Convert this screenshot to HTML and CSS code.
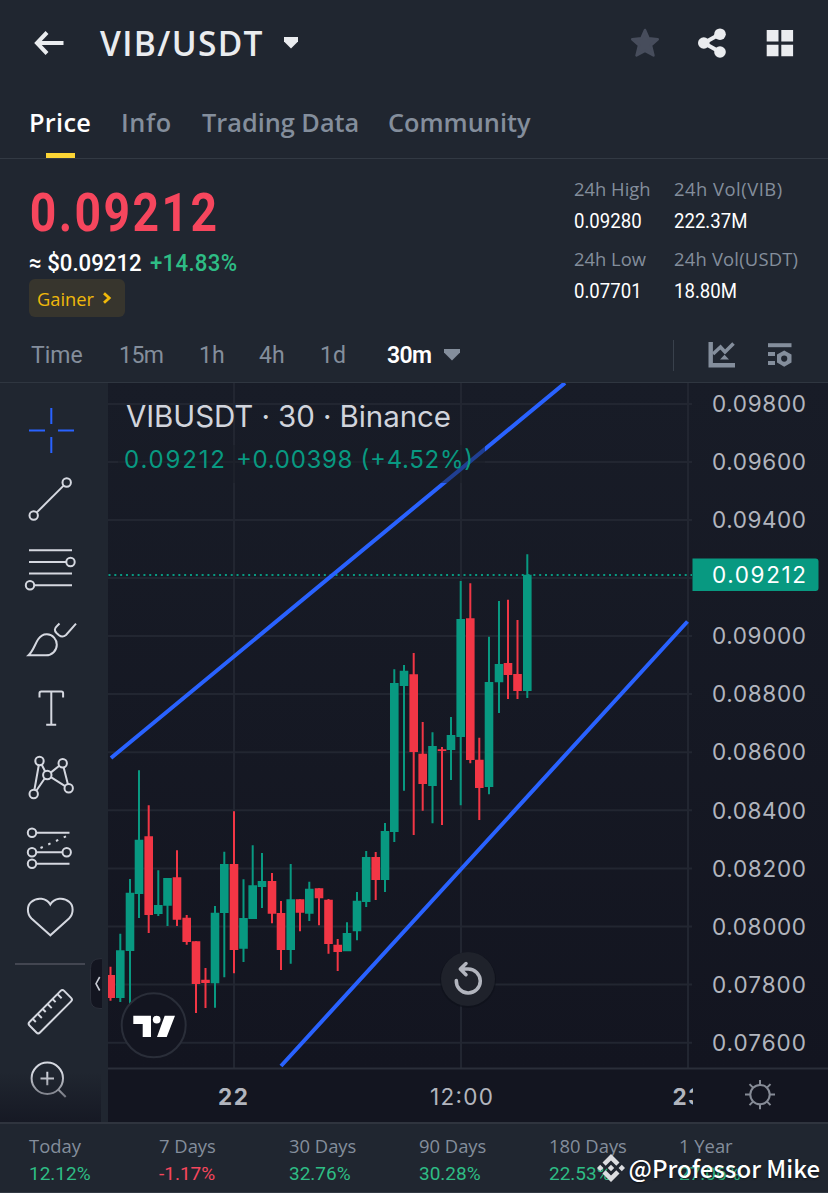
FILE: index.html
```html
<!DOCTYPE html>
<html lang="en">
<head>
<meta charset="utf-8">
<title>VIB/USDT</title>
<link rel="stylesheet" href="styles.css">
</head>
<body>
<div class="app">
  <header class="topbar">
    <svg class="back" width="30" height="26" viewBox="0 0 30 26"><path d="M13 2.500L3 13L13 23.500M3.500 13H29.500" fill="none" stroke="#eaecef" stroke-width="4"/></svg>
    <h1 class="pair">VIB/USDT</h1>
    <svg class="caret" width="16" height="12" viewBox="0 0 16 12"><path d="M1 0H15V4.500L8 11.500L1 4.500Z" fill="#eaecef"/></svg>
    <div class="actions">
      <svg width="30" height="32" viewBox="0 0 30 32"><path d="M15 3L18.600 11.300L27.800 12.200L21 18.300L23.500 28.500L15 24L6.500 28.500L9 18.300L2.200 12.200L11.400 11.300Z" fill="#474d5c" stroke="#474d5c" stroke-width="2.500" stroke-linejoin="round"/></svg>
      <svg width="30" height="32" viewBox="0 0 30 32"><path d="M23 7L7 16L23 25" fill="none" stroke="#eaecef" stroke-width="4"/><circle cx="23" cy="7.200" r="5.800" fill="#eaecef"/><circle cx="6.800" cy="16" r="5.800" fill="#eaecef"/><circle cx="23" cy="25" r="5.800" fill="#eaecef"/></svg>
      <svg width="28" height="28" viewBox="0 0 28 28"><path d="M.7 1H12.500V12.500H.7ZM15.300 1H27.100V12.500H15.300ZM.7 15.700H12.500V27.200H.7ZM15.300 15.700H27.100V27.200H15.300Z" fill="#eaecef"/></svg>
    </div>
  </header>

  <nav class="tabs">
    <a class="tab tab-active">Price</a>
    <a class="tab tab-info">Info</a>
    <a class="tab tab-trading">Trading Data</a>
    <a class="tab tab-community">Community</a>
  </nav>

  <section class="summary">
    <div class="quote">
      <div class="last">0.09212</div>
      <div class="fiat"><span class="approx">≈ $0.09212</span><span class="up change">+14.83%</span></div>
      <div class="tag"><span>Gainer</span><svg width="10" height="12" viewBox="0 0 10 12"><path d="M2 1.200L7.200 6L2 10.800" fill="none" stroke="#f0b90b" stroke-width="2.800"/></svg></div>
    </div>
    <dl class="stats">
      <div><dt>24h High</dt><dd>0.09280</dd></div>
      <div><dt class="base-vol">24h Vol(VIB)</dt><dd>222.37M</dd></div>
      <div><dt>24h Low</dt><dd>0.07701</dd></div>
      <div><dt class="quote-vol">24h Vol(USDT)</dt><dd>18.80M</dd></div>
    </dl>
  </section>

  <div class="intervals">
    <span class="iv iv-time">Time</span>
    <span class="iv iv-15">15m</span>
    <span class="iv iv-1h">1h</span>
    <span class="iv iv-4h">4h</span>
    <span class="iv iv-1d">1d</span>
    <span class="iv iv-active">30m</span>
    <svg class="iv-caret" width="16" height="12" viewBox="0 0 16 12"><path d="M0 0H16V3.500L8 11.500L0 3.500Z" fill="#848e9c"/></svg>
    <div class="chart-tools">
      <svg width="28" height="28" viewBox="0 0 28 28"><path d="M2.700 1V24.300H27" fill="none" stroke="#848e9c" stroke-width="4.400"/><path d="M5 13L12.500 6L17 11L25.500 2.500" fill="none" stroke="#848e9c" stroke-width="3.600"/><path d="M16.500 13.700L21 18.500H12Z" fill="#848e9c"/></svg>
      <svg width="26" height="26" viewBox="0 0 26 26"><path d="M1 3.200H24.500" stroke="#848e9c" stroke-width="4"/><path d="M1 12H8M1 21H8" stroke="#848e9c" stroke-width="4"/><path fill-rule="evenodd" d="M17.200 8.500L24.500 12.500V20.500L17.200 24.800L10 20.500V12.500ZM17.200 13.500A3.100 3.100 0 1 0 17.200 19.700A3.100 3.100 0 1 0 17.200 13.500Z" fill="#848e9c"/></svg>
    </div>
  </div>

  <main class="workspace">
    <aside class="toolbar">
      <svg class="tool" viewBox="0 395 101 70"><path d="M51.300 408V424M51.300 437V453M29 430.500H45M58 430.500H74" stroke="#2962ff" stroke-width="2"/></svg>
      <svg class="tool" viewBox="0 465 101 70"><circle cx="66.700" cy="482.500" r="4.200"/><circle cx="33.700" cy="515.500" r="4.200"/><path d="M36.800 512.400L63.600 485.600"/></svg>
      <svg class="tool" viewBox="0 535 101 70"><path d="M29 550.300H72M29 562H66M29 573.500H72M34.500 585.200H72"/><circle cx="70.500" cy="562" r="4.200"/><circle cx="30" cy="585.200" r="4.200"/></svg>
      <svg class="tool" viewBox="0 605 101 70"><path d="M28.500 655.300C33.500 650.500 35 644 38 639.500C41 635 44.500 634.200 47 634.300C52.800 634.500 56.800 639.500 56.800 644.700C56.800 650.500 52 655.300 46 655.300ZM59.500 623.500L57 626Q53 629.500 56.500 633L59 635.200Q62.500 638 66 635L76 623.700"/></svg>
      <svg class="tool" viewBox="0 675 101 70"><path d="M39.500 697.500V693.200Q39.500 691.500 41.200 691.500H61.400Q63.100 691.500 63.100 693.200V697.500M51.300 691.500V724.700M46.200 724.700H56.200"/></svg>
      <svg class="tool" viewBox="0 745 101 70"><path d="M38.800 765L34.400 790M41.600 764.500L45.200 771.500M44.800 778.300L36.300 790.800M50.700 772.600L59.300 765.700M63.600 767.300L67.900 784.300M50.900 777.200L65.100 786.100"/><circle cx="39.500" cy="761" r="4.200"/><circle cx="62.700" cy="763.300" r="4.200"/><circle cx="47.300" cy="775" r="4.200"/><circle cx="68.700" cy="788.300" r="4.200"/><circle cx="33.700" cy="794" r="4.200"/></svg>
      <svg class="tool" viewBox="0 815 101 70"><path d="M36.200 832.700H69.500M36.200 852.300H62.500M36.200 863.700H69.500"/><path d="M40.500 848L68 835.500" stroke-dasharray="2.500 6"/><circle cx="32" cy="832.700" r="4.200"/><circle cx="32" cy="852.300" r="4.200"/><circle cx="66.700" cy="852.300" r="4.200"/><circle cx="32" cy="863.700" r="4.200"/></svg>
      <svg class="tool" viewBox="0 885 101 70"><path d="M50.300 935.300L31.500 918.500C26.500 913.500 27 905.500 31.200 902C37 896.800 46.500 897.800 50.300 904.500C54.200 897.800 63.700 896.800 69.400 902C73.500 905.500 74 913.500 69 918.500Z"/></svg>
      <hr class="divider">
      <svg class="tool" viewBox="0 974 101 70"><g transform="translate(50.300 1011.700) rotate(-45)"><rect x="-24.500" y="-7.400" width="49" height="14.800" rx="2.500"/><path d="M-17.500 -7.400V-3M-10.500 -7.400V-1.500M-3.500 -7.400V-3M3.500 -7.400V-1.500M10.500 -7.400V-3M17.500 -7.400V-1.500"/></g></svg>
      <svg class="tool" viewBox="0 1044 101 70"><circle cx="47.300" cy="1078.300" r="15.700"/><path d="M40.500 1078.500H54M47.300 1071.700V1085.200M58.500 1089.700L65.700 1097"/></svg>
      <div class="fade"></div>
      <svg class="collapse" width="13" height="52" viewBox="89 958 13 52"><path d="M102 958.700H100Q90.500 958.700 90.500 968.500V999Q90.500 1008.500 100 1008.500H102" fill="#131520" stroke="#2a2e39"/><path d="M99.700 977L96 983.700L99.700 990.500" fill="none" stroke="#c8cbd4" stroke-width="1.600"/></svg>
    </aside>

    <svg class="chart" width="720" height="739" viewBox="108 383 720 739">
      <defs>
        <linearGradient id="pane" x1="0" y1="0" x2="0" y2="1"><stop offset="0" stop-color="#181c27"/><stop offset="1" stop-color="#131520"/></linearGradient>
        <clipPath id="time"><rect x="108" y="1070" width="585" height="52"/></clipPath>
      </defs>
      <rect x="108" y="383" width="720" height="686" fill="url(#pane)"/>
      <rect x="108" y="1069" width="720" height="53" fill="#131520"/>

      <!-- grid -->
      <path d="M108 404H692M108 462H692M108 520H692M108 578H692M108 636H692M108 694H692M108 752.200H692M108 810.300H692M108 868.500H692M108 926.500H692M108 984.500H692M108 1042.700H692M234 383V1068M461 383V1068M688 383V1068" stroke="#222631" stroke-width="2"/>
      <path d="M108 1068.500H828" stroke="#2a2e39" stroke-width="2"/>

      <!-- last price -->
      <path d="M108.500 575H692" stroke="#089981" stroke-width="2" stroke-dasharray="2 3.820"/>

      <!-- candle wicks and bodies -->
      <g fill="none" stroke="#089981">
        <path stroke-width="2" d="M120.300 933.700V1002M130 879V1006M139 770.300V918M158.300 870.300V916M167.500 878V926M215 906V1007.700M224.300 851.700V977.300M243.500 879.300V962M252.700 845.300V919M262 853V908M290.700 864V963.700M309.300 881.700V921M347 922.300V951M357 892V940.300M366.200 851V907M385 823V892M394.300 669.300V842M404 665V790.700M432.500 732.300V823.300M451 717V780M460.700 581V805.300M489 636.700V794.300M499 601V713M527.300 554.300V698"/>
        <path stroke-width="8.600" d="M120.300 950.300V998M130 892.700V951M139 839.700V894M158.300 905V914M167.500 878V905.700M215 912.700V983.300M224.300 864V913M243.500 918V948.700M252.700 885.300V919M262 881V887M290.700 899.300V950M309.300 888.700V913.700M347 933V951.300M357 900.700V931.300M366.200 857V902M385 831V880M394.300 683V832M404 670.700V686M432.500 746V786M451 735V750M460.700 619V737M489 682V787M499 664V682.300M527.300 574.700V691"/>
      </g>
      <g fill="none" stroke="#f23645">
        <path stroke-width="2" d="M110.500 966.700V1000.700M148.700 805.300V933M177 850.300V926M186.700 915V944.700M196 941.300V1013M205.500 968V1008M234 811.300V973.300M272 873V923.300M281 901V970M300 899.300V931.300M319 888.300V925.300M328.500 899V953.700M337.700 939V971M375.700 852V900M413.700 653V835M422.700 722V810.700M442 747V825M470.300 583.300V763.300M479.300 737.700V820M508 599.700V699M517.500 620V699"/>
        <path stroke-width="8.600" d="M110.700 975V998M148.700 836.300V915M177 877.300V919.700M186.700 917.700V942M196 941.300V984M205.500 979.700V983M234 864V950M272 881V913.700M281 913V950M300 899.300V912.700M319 888.300V898.300M328.500 899.700V944M337.700 944.700V952M375.700 857V880M413.700 674.300V752M422.700 753.700V784M442 749.200V751M470.300 618.300V760M479.300 759.700V788M508 663V675M517.500 674V691"/>
      </g>

      <!-- channel -->
      <path d="M111 758L565 383M281 1066L687.500 621.500" stroke="#2962ff" stroke-width="4"/>

      <!-- legend -->
      <rect x="118" y="445" width="367" height="38" fill="#171b26" opacity=".5"/>
      <text class="legend-title" x="126" y="426.500" textLength="325">VIBUSDT · 30 · Binance</text>
      <text class="legend-value" x="124" y="468.300" textLength="101">0.09212</text>
      <text class="legend-value" x="236" y="468.300" textLength="237">+0.00398 (+4.52%)</text>

      <!-- price scale -->
      <g class="scale">
        <text x="712" y="412.300" textLength="94">0.09800</text>
        <text x="712" y="470.300" textLength="94">0.09600</text>
        <text x="712" y="528.300" textLength="94">0.09400</text>
        <text x="712" y="644.300" textLength="94">0.09000</text>
        <text x="712" y="702.300" textLength="94">0.08800</text>
        <text x="712" y="760.300" textLength="94">0.08600</text>
        <text x="712" y="818.500" textLength="94">0.08400</text>
        <text x="712" y="876.500" textLength="94">0.08200</text>
        <text x="712" y="934.500" textLength="94">0.08000</text>
        <text x="712" y="992.500" textLength="94">0.07800</text>
        <text x="712" y="1050.500" textLength="94">0.07600</text>
      </g>
      <path d="M692.500 558.500H815.500Q818.500 558.500 818.500 561.500V588Q818.500 591 815.500 591H692.500Z" fill="#089981"/>
      <text class="badge" x="712" y="583" textLength="94">0.09212</text>

      <!-- time scale -->
      <g class="scale" clip-path="url(#time)">
        <text class="day" x="218" y="1104.500" textLength="30">22</text>
        <text x="430" y="1104.500" textLength="63">12:00</text>
        <text class="day" x="672.500" y="1104.500" textLength="30">23</text>
      </g>
      <g fill="none" stroke="#868b96" stroke-width="2"><circle cx="760" cy="1094.600" r="9.700"/><path d="M760 1080V1085M760 1104V1109.300M745 1094.600H750M770 1094.600H775M749.500 1084.100L753 1087.600M767 1101.600L770.500 1105.100M749.500 1105.100L753 1101.600M767 1087.600L770.500 1084.100"/></g>

      <!-- attribution mark -->
      <circle cx="153.700" cy="1025.300" r="32" fill="#131520" stroke="#2a2e39" stroke-width="2"/>
      <path d="M133.300 1015.700H151V1037H142.700V1024H133.300ZM164.700 1015.700H175L166.700 1037H157Z" fill="#fff"/>
      <circle cx="156.700" cy="1019.600" r="3.900" fill="#fff"/>

      <!-- reset view -->
      <circle cx="468" cy="980" r="28" fill="#0e1019" opacity=".6"/>
      <circle cx="468" cy="979" r="27" fill="#1f222b"/>
      <path d="M456.300 980.500A12 12 0 1 0 468 969H461M466 963.500L460.300 969L466 974.700" fill="none" stroke="#b2b5be" stroke-width="3.500" stroke-linecap="round" stroke-linejoin="round"/>
    </svg>
  </main>

  <footer class="returns">
    <div><span>Today</span><b class="up">12.12%</b></div>
    <div><span>7 Days</span><b class="down">-1.17%</b></div>
    <div><span>30 Days</span><b class="up">32.76%</b></div>
    <div><span>90 Days</span><b class="up">30.28%</b></div>
    <div><span>180 Days</span><b class="up">22.53%</b></div>
    <div><span>1 Year</span><b class="up">27.06%</b></div>
  </footer>
  <div class="signature">
    <svg width="28" height="28" viewBox="0 0 28 28"><path d="M14 0L22.500 8.500L19.300 11.700L14 6.400L8.700 11.700L5.500 8.500ZM14 28L5.500 19.500L8.700 16.300L14 21.600L19.300 16.300L22.500 19.500ZM3.200 10.800L6.400 14L3.200 17.200L0 14ZM24.800 10.800L28 14L24.800 17.200L21.600 14ZM14 10.800L17.200 14L14 17.200L10.800 14Z" fill="#dcdde0"/></svg>
    <span>@Professor Mike</span>
  </div>
</div>
</body>
</html>
```
FILE: styles.css
```css
* { box-sizing: border-box; }
body { margin: 0; background: #202630; color: #eaecef; font-family: "Open Sans", sans-serif; }
svg { display: block; flex: none; }
.app { position: relative; width: 828px; height: 1193px; overflow: hidden; display: flex; flex-direction: column; }

.topbar { display: flex; align-items: center; height: 85px; padding: 0 35px 0 34px; }
.pair { margin: 0 0 0 36px; width: 164px; font-size: 33.500px; line-height: 86px; font-weight: 600; letter-spacing: 1.350px; white-space: nowrap; }
.caret { margin-left: 19px; }
.actions { display: flex; align-items: center; gap: 37px; margin-left: auto; }
.actions svg:last-child { margin-left: 2px; margin-right: -1px; }

.tabs { display: flex; height: 74px; padding-left: 29px; border-bottom: 1px solid #323943; }
.tab { position: relative; font-size: 25.300px; line-height: 75px; font-weight: 600; color: #848e9c; white-space: nowrap; }
.tab-active { width: 92px; color: #fff; letter-spacing: .3px; }
.tab-active::after { content: ""; position: absolute; left: 17px; bottom: 0; width: 29px; height: 5px; background: #fcd535; }
.tab-info { width: 81px; letter-spacing: .6px; }
.tab-trading { width: 186px; }

.summary { display: flex; justify-content: space-between; height: 170px; padding: 20px 29px 0; }
.last { height: 66px; padding-left: 1px; font: 700 54.500px/66px Roboto, sans-serif; color: #f6465d; transform: scaleX(.85); transform-origin: 0 0; letter-spacing: 2.800px; }
.fiat { display: flex; gap: 9px; height: 34px; font: 500 24px/36px Roboto, sans-serif; color: #fff; white-space: nowrap; transform: scaleX(.925); transform-origin: 0 0; }
.change { letter-spacing: .3px; }
.up { color: #2ebd85; }
.down { color: #f6465d; }
.tag { display: flex; align-items: center; gap: 8px; width: 96px; height: 38px; padding-left: 8px; border-radius: 6px; background: #37352d; color: #f0b90b; font-size: 18.300px; }
.stats { display: grid; grid-template-columns: 100px 125px; grid-auto-rows: 70px; margin: -5px 0 0; }
.stats dt { font-size: 18.400px; line-height: 30px; color: #848e9c; white-space: nowrap; }
.stats .base-vol { letter-spacing: .5px; }
.stats .quote-vol { letter-spacing: .2px; }
.stats dd { margin: 0; font: 400 20px/34px Roboto, sans-serif; color: #fff; transform: scaleX(.93); transform-origin: 0 0; }

.intervals { display: flex; align-items: center; height: 54px; padding: 0 35px 0 31px; border-bottom: 1px solid #2f3640; font: 400 23px/54px Roboto, sans-serif; color: #848e9c; }
.iv-time { width: 88px; }
.iv-15 { width: 80px; letter-spacing: -.5px; }
.iv-1h { width: 60px; }
.iv-4h { width: 61px; }
.iv-1d { width: 67px; }
.iv-active { width: 57px; color: #fff; font-weight: 600; letter-spacing: -.6px; }
.iv-caret { margin-bottom: 2px; }
.chart-tools { display: flex; align-items: center; gap: 31px; height: 31px; margin: 0 0 1px auto; padding-left: 34px; border-left: 1px solid #39414c; }

.workspace { display: flex; height: 739px; }
.toolbar { position: relative; display: flex; flex-direction: column; width: 108px; padding-top: 12px; }
.tool { width: 101px; height: 70px; fill: none; stroke: #d5d8e0; stroke-width: 2; }
.divider { width: 70px; height: 2px; margin: 8px 0 9px 15px; border: 0; background: #434651; }
.fade { position: absolute; left: 0; bottom: 0; width: 101px; height: 50px; background: linear-gradient(rgba(19, 21, 32, 0), #161924); }
.collapse { position: absolute; left: 89px; top: 575px; }

.chart { font-family: Inter, sans-serif; }
.legend-title { font-size: 29.500px; fill: #d1d4dc; }
.legend-value { font-size: 24px; fill: #089981; }
.scale { font-size: 22.500px; fill: #b2b5be; }
.day { font-weight: 700; }
.badge { font-size: 22.500px; fill: #fff; }

.returns { display: grid; grid-template-columns: repeat(6, 130px); height: 71px; padding: 8px 0 0 29px; border-top: 2px solid #2f343e; border-bottom: 1px solid #323943; }
.returns span { display: block; font-size: 18.400px; line-height: 27px; color: #848e9c; white-space: nowrap; }
.returns b { display: block; font: 400 19px/30px Roboto, sans-serif; }

.signature { position: absolute; right: 8px; bottom: 7px; display: flex; align-items: center; gap: 4px; height: 36px; color: #fff; font: 500 24px/36px "Noto Sans CJK SC", sans-serif; white-space: nowrap; text-shadow: 0 1px 2px rgba(0, 0, 0, .6); }
```
